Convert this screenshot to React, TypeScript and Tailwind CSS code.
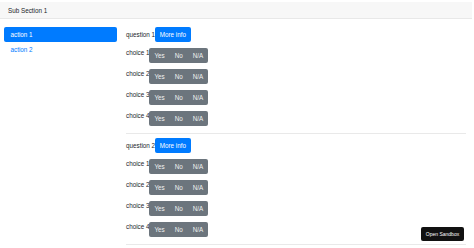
import React from 'react';

const questions = ['question 1', 'question 2'];
const choices = ['choice 1', 'choice 2', 'choice 3', 'choice 4'];

function ChoiceRow({label}: {label: string}) {
  return (
    <div className="flex items-start">
      <span className="whitespace-pre">{label}</span>
      <div className="flex h-[15px] bg-[#6c757d] rounded-[2px] text-[#f1f1f1]">
        <button className="px-[5px] h-full leading-[9px]">Yes</button>
        <button className="px-[5px] h-full leading-[9px]">No</button>
        <button className="px-[5px] h-full leading-[9px]">N/A</button>
      </div>
    </div>
  );
}

function Question({label}: {label: string}) {
  return (
    <div className="flex flex-col gap-[6px] pb-[7px] border-b border-[#e9e9e9] mb-[4px]">
      <div className="flex items-center">
        <span className="whitespace-pre">{label}</span>
        <button className="h-[15px] px-[4.7px] bg-[#007bff] text-white rounded-[2px] leading-[9px]">More info</button>
      </div>
      {choices.map((c) => (
        <ChoiceRow key={c} label={c} />
      ))}
    </div>
  );
}

export default function App() {
  return (
    <div className="relative w-[474px] h-[248px] bg-white overflow-hidden font-['Liberation_Sans',Arial,sans-serif] text-[6.3px] leading-[9px] text-[#212529]">
      <div className="mt-[2px] w-[472px] h-[17px] bg-[#f7f7f7] border-b border-[#e8e8e8] flex items-center px-[8px]">
        Sub Section 1
      </div>

      <div className="flex pt-[8px] pl-[4px] pr-[8px]">
        <nav className="w-[113px] flex flex-col shrink-0">
          <a className="h-[15px] px-[6.5px] flex items-center rounded-[2px] bg-[#007bff] text-white">action 1</a>
          <a className="h-[15px] px-[6.5px] flex items-center text-[#007bff]">action 2</a>
        </nav>

        <div className="ml-[9px] flex-1 flex flex-col">
          {questions.map((q) => (
            <Question key={q} label={q} />
          ))}
        </div>
      </div>

      <button className="absolute left-[421px] top-[227px] w-[43px] h-[14px] bg-[#111] text-white rounded-[2px] text-[5px] leading-[7px] flex items-center justify-center">
        Open Sandbox
      </button>
    </div>
  );
}
